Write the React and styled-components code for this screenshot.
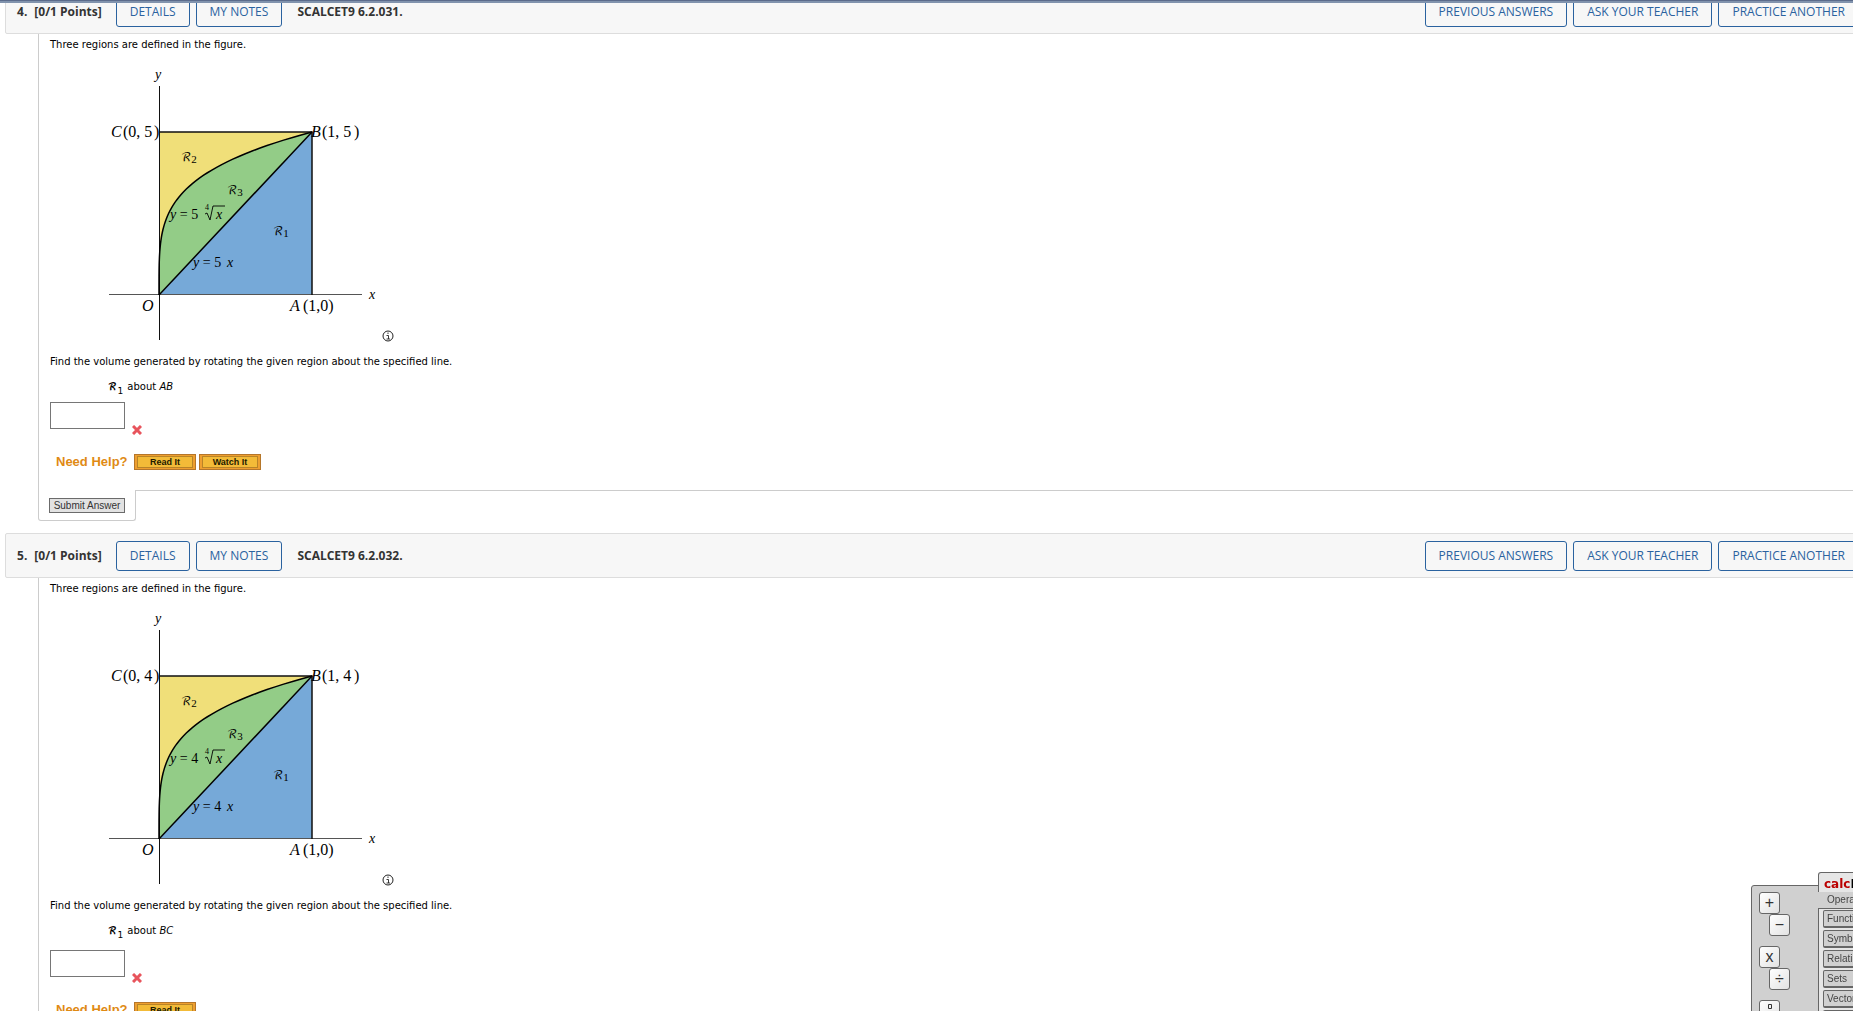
import styled, { createGlobalStyle, css } from "styled-components";

const GlobalStyle = createGlobalStyle`
    * {
        box-sizing: border-box;
    }

    body {
        margin: 0;
        background: #fff;
        color: #000;
        font-family: "DejaVu Sans", sans-serif;
        font-size: 10px;
    }
`;

const questions = [
    { id: 4, code: "SCALCET9 6.2.031.", height: 5, side: "AB", helps: ["Read It", "Watch It"], roomy: false },
    { id: 5, code: "SCALCET9 6.2.032.", height: 4, side: "BC", helps: ["Read It"], roomy: true },
];

const padSections = ["Functions", "Symbols", "Relations", "Sets", "Vectors", "Trig"];

// unit square of the graph in svg units
const LEFT = 51;
const RIGHT = 204;
const TOP = 64;
const BOTTOM = 227;

const curve = Array.from({ length: 61 }, (_, i) => {
    const t = i / 60;
    const x = LEFT + (RIGHT - LEFT) * t ** 4;
    const y = BOTTOM - (BOTTOM - TOP) * t;
    return `${x.toFixed(2)},${y.toFixed(2)}`;
}).join(" L");

function Graph({ height }) {
    return (
        <GraphSvg viewBox="0 0 274 274" role="img" aria-label="Regions R1, R2 and R3">
            <rect x={LEFT} y={TOP} width={RIGHT - LEFT} height={BOTTOM - TOP} fill="#f0df79" />
            <path d={`M${curve} Z`} fill="#93cc87" />
            <path d={`M${LEFT},${BOTTOM} L${RIGHT},${TOP} V${BOTTOM} Z`} fill="#76a9d8" />
            <path d="M1 226.5 H254" stroke="#555" fill="none" />
            <path d="M51.5 18 V272" stroke="#111" fill="none" />
            <path d={`M${LEFT} ${TOP} H${RIGHT} V${BOTTOM}`} stroke="#111" strokeWidth="1.5" fill="none" />
            <path d={`M${LEFT} ${BOTTOM} L${RIGHT} ${TOP}`} stroke="#000" strokeWidth="1.5" />
            <path d={`M${curve}`} stroke="#000" strokeWidth="1.5" fill="none" />
            <g fontSize="16">
                <text x="3" y="69" fontStyle="italic">C</text>
                <text x="15" y="69">(0, {height}</text>
                <text x="46" y="69">)</text>
                <text x="203" y="69" fontStyle="italic">B</text>
                <text x="214" y="69">(1, {height}</text>
                <text x="246" y="69">)</text>
                <text x="34" y="243" fontStyle="italic">O</text>
                <text x="182" y="243" fontStyle="italic">A</text>
                <text x="195" y="243">(1,0)</text>
            </g>
            <g fontSize="14">
                <text x="47" y="11" fontStyle="italic">y</text>
                <text x="261" y="231" fontStyle="italic">x</text>
                <text x="62" y="151"><tspan fontStyle="italic">y</tspan> = {height}</text>
                <text x="108" y="151" fontStyle="italic">x</text>
                <text x="97" y="142" fontSize="8">4</text>
                <path d="M97 146 L99 145 L102 152 L105 138 H117" stroke="#000" fill="none" strokeWidth="0.9" />
                <text x="85" y="199"><tspan fontStyle="italic">y</tspan> = {height}</text>
                <text x="119" y="199" fontStyle="italic">x</text>
            </g>
            <ScriptR x="73" y="93" n="2" />
            <ScriptR x="119" y="126" n="3" />
            <ScriptR x="165" y="167" n="1" />
        </GraphSvg>
    );
}

function ScriptR({ x, y, n }) {
    return (
        <text x={x} y={y} fontSize="12" fontFamily="'DejaVu Math TeX Gyre', 'DejaVu Sans', sans-serif">
            ℛ<tspan fontFamily="'Liberation Serif', serif" fontSize="11" dy="2">{n}</tspan>
        </text>
    );
}

function Question({ question }) {
    const inputId = `answer-${question.id}`;

    return (
        <section>
            <Header>
                <Points>{question.id}.</Points>
                <Points>[0/1 Points]</Points>
                <HeaderGroup $start>
                    <HeaderButton>DETAILS</HeaderButton>
                    <HeaderButton>MY NOTES</HeaderButton>
                </HeaderGroup>
                <Code>{question.code}</Code>
                <HeaderGroup $end>
                    <HeaderButton>PREVIOUS ANSWERS</HeaderButton>
                    <HeaderButton>ASK YOUR TEACHER</HeaderButton>
                    <HeaderButton>PRACTICE ANOTHER</HeaderButton>
                </HeaderGroup>
            </Header>
            <Body>
                <Text>Three regions are defined in the figure.</Text>
                <Figure>
                    <Graph height={question.height} />
                    <InfoButton aria-label="Figure information">
                        <svg width="12" height="12" viewBox="0 0 12 12" fill="none" stroke="#222">
                            <circle cx="6" cy="6" r="5" />
                            <path d="M6 2.5 V4 M4.5 5.5 H6.5 V9 M4.5 9 H8" strokeWidth="0.9" />
                        </svg>
                    </InfoButton>
                </Figure>
                <Text>Find the volume generated by rotating the given region about the specified line.</Text>
                <Prompt htmlFor={inputId}>
                    <b>ℛ</b><sub>1</sub> about <i>{question.side}</i>
                </Prompt>
                <AnswerRow $roomy={question.roomy}>
                    <AnswerInput id={inputId} type="text" />
                    <svg width="10" height="10" viewBox="0 0 10 10" role="img" aria-label="Incorrect">
                        <path d="M1 1 L9 9 M9 1 L1 9" stroke="#e8545c" strokeWidth="3" />
                    </svg>
                </AnswerRow>
                <HelpRow>
                    <HelpLabel>Need Help?</HelpLabel>
                    {question.helps.map((help) => (
                        <HelpButton key={help}><span>{help}</span></HelpButton>
                    ))}
                </HelpRow>
            </Body>
            <SubmitRow>
                <SubmitTab>
                    <SubmitButton>Submit Answer</SubmitButton>
                </SubmitTab>
            </SubmitRow>
        </section>
    );
}

function CalcPad() {
    return (
        <Pad>
            <PadKeys>
                <PadKey>+</PadKey>
                <PadKey $shift>−</PadKey>
                <PadKey $gap>x</PadKey>
                <PadKey $shift>÷</PadKey>
                <PadKey $gap aria-label="Fraction">
                    <svg width="12" height="16" viewBox="0 0 12 16" fill="none" stroke="#333">
                        <path d="M4.5 1.5 H7.5 V5.5 H4.5 Z M2 8.5 H10 M4.5 11.5 H7.5 V15.5 H4.5 Z" />
                    </svg>
                </PadKey>
            </PadKeys>
            <PadSide>
                <PadTitle><b>calc</b>Pad</PadTitle>
                <PadCurrent>Operations</PadCurrent>
                <PadList>
                    {padSections.map((name) => (
                        <PadSection key={name}>{name}</PadSection>
                    ))}
                </PadList>
            </PadSide>
        </Pad>
    );
}

export default function App() {
    return (
        <>
            <GlobalStyle />
            <Page>
                <TopBar />
                <Questions>
                    {questions.map((question) => (
                        <Question key={question.id} question={question} />
                    ))}
                </Questions>
            </Page>
            <CalcPad />
        </>
    );
}

const Page = styled.div`
    display: flex;
    flex-direction: column;
    height: 100vh;
    overflow: hidden;
`;

const TopBar = styled.div`
    flex: none;
    height: 3px;
    background: #8193ad;
    border-top: 1px solid #5b6b8b;
    z-index: 1;
`;

const Questions = styled.main`
    margin: -14px -22px 0 5px;
`;

const Header = styled.header`
    display: flex;
    align-items: center;
    height: 45px;
    padding: 0 15px 0 11px;
    background: #f7f7f7;
    border: 1px solid #ddd;
    border-radius: 2px;
    font-family: "Open Sans", sans-serif;
    font-size: 12px;
    color: #333;
`;

const Points = styled.span`
    margin-right: 7px;
    font-weight: 700;
`;

const HeaderGroup = styled.div`
    display: flex;
    gap: 6px;
    ${({ $start }) => $start && css`margin: 0 15px 0 7px;`}
    ${({ $end }) => $end && css`margin-left: auto;`}
`;

const HeaderButton = styled.button`
    height: 30px;
    padding: 0 13px;
    border: 1px solid #2a629f;
    border-radius: 3px;
    background: transparent;
    color: #2a629f;
    font: 12px "Open Sans", sans-serif;
    white-space: nowrap;
`;

const Code = styled.strong`
    font-weight: 700;
`;

const Body = styled.div`
    margin-left: 33px;
    padding: 4px 0 20px 11px;
    border-left: 1px solid #ccc;
`;

const Text = styled.p`
    margin: 0;
    line-height: 14px;
`;

const Figure = styled.div`
    display: flex;
    align-items: flex-end;
    margin: 16px 0 13px 58px;
`;

const GraphSvg = styled.svg`
    width: 274px;
    height: 274px;
    overflow: visible;
    font-family: "Liberation Serif", serif;
    white-space: pre;
`;

const InfoButton = styled.button`
    display: flex;
    padding: 0;
    border: 0;
    background: none;
`;

const Prompt = styled.label`
    display: block;
    margin: 11px 0 0 58px;
    height: 14px;
    line-height: 14px;

    b {
        font-family: "DejaVu Math TeX Gyre", "DejaVu Sans", sans-serif;
    }

    sub {
        margin: 0 1px;
        font-size: 9px;
        line-height: 0;
        vertical-align: -4px;
    }
`;

const AnswerRow = styled.div`
    display: flex;
    align-items: flex-end;
    gap: 7px;
    height: 33px;
    margin-top: ${({ $roomy }) => ($roomy ? 12 : 8)}px;
`;

const AnswerInput = styled.input`
    align-self: flex-start;
    width: 75px;
    height: 27px;
    padding: 2px 4px;
    border: 1px solid #767676;
    font: 13px "Liberation Sans", sans-serif;
`;

const HelpRow = styled.div`
    display: flex;
    align-items: center;
    margin: 19px 0 0 6px;
`;

const HelpLabel = styled.span`
    width: 78px;
    color: #e08a14;
    font: bold 13px/16px "Liberation Sans", sans-serif;
`;

const HelpButton = styled.button`
    width: 62px;
    height: 16px;
    margin-right: 3px;
    padding: 1px 2px;
    border: 1px solid #b5762a;
    background: #ee9f30;
    color: #221a00;
    font: bold 9px/10px "Liberation Sans", sans-serif;

    span {
        display: block;
        border: 1px solid #b98428;
        background: #f3bb38;
    }
`;

const SubmitRow = styled.div`
    display: flex;
    margin: 0 0 12px 33px;

    &::after {
        content: "";
        flex: 1;
        border-top: 1px solid #ccc;
    }
`;

const SubmitTab = styled.div`
    height: 31px;
    width: 98px;
    padding: 8px 10px;
    border: 1px solid #ccc;
    border-top: 0;
    border-radius: 0 0 3px 3px;
`;

const SubmitButton = styled.button`
    display: block;
    width: 76px;
    height: 15px;
    padding: 0;
    border: 1px solid #6b6b6b;
    background: #e2e2e2;
    color: #333;
    font: 10px/13px "Liberation Sans", sans-serif;
    white-space: nowrap;
`;

const Pad = styled.aside`
    position: fixed;
    right: -60px;
    bottom: -120px;
    z-index: 2;
    display: flex;
    width: 162px;
    height: 246px;
    border: 1px solid #666;
    border-radius: 3px;
    background: #d0d0d0;
    font-family: "Liberation Sans", sans-serif;
`;

const PadKeys = styled.div`
    width: 66px;
    padding: 6px 0 0 7px;
`;

const PadKey = styled.button`
    display: flex;
    align-items: center;
    justify-content: center;
    width: 21px;
    height: 22px;
    margin: ${({ $gap }) => ($gap ? "10px" : "0")} 0 0 ${({ $shift }) => ($shift ? "10px" : "0")};
    padding: 0;
    border: 1px solid #666;
    border-radius: 3px;
    background: linear-gradient(135deg, #fff, #e2e2e2);
    color: #333;
    font: 16px "Liberation Sans", sans-serif;
`;

const PadSide = styled.div`
    flex: 1;
    margin-top: -14px;
`;

const PadTitle = styled.div`
    height: 20px;
    padding: 2px 5px;
    border: 1px solid #666;
    border-bottom-width: 0;
    border-radius: 3px 3px 0 0;
    background: #e6e6e6;
    font: 900 12px/18px "DejaVu Sans", sans-serif;

    b {
        color: #b00;
    }
`;

const PadCurrent = styled.div`
    padding-left: 9px;
    color: #444;
    font-size: 10px;
    line-height: 16px;
`;

const PadList = styled.div`
    display: flex;
    flex-direction: column;
    gap: 2px;
    padding: 1px 0 0 4px;
    border: 1px solid #666;
    background: #e6e6e6;
`;

const PadSection = styled.button`
    height: 18px;
    padding: 0 3px;
    border: 1px solid #666;
    border-bottom-width: 2px;
    border-radius: 2px;
    background: #d0d0d0;
    color: #444;
    font: 10px "Liberation Sans", sans-serif;
    text-align: left;
`;
